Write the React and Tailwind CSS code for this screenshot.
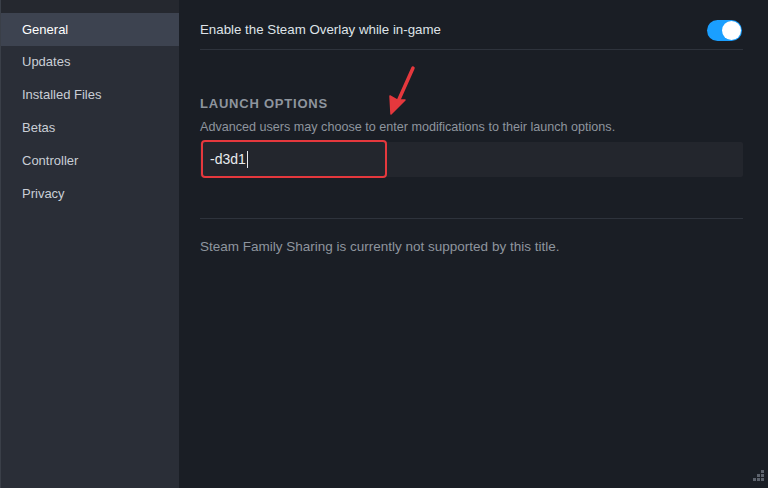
import React from 'react'

const items = ['General', 'Updates', 'Installed Files', 'Betas', 'Controller', 'Privacy']

export default function App() {
  return (
    <div
      className="w-[768px] h-[488px] flex bg-[#1a1e25] overflow-hidden relative"
      style={{ fontFamily: '"Liberation Sans", Arial, sans-serif' }}
    >
      {/* sidebar */}
      <div className="w-[179px] shrink-0 bg-[#2a2e37] flex flex-col border-l border-[#3a3f48]">
        <div className="h-[13px] bg-[#25282f]" />
        {items.map((it, i) => (
          <div
            key={it}
            className={
              'h-[32.8px] flex items-center pl-[21px] text-[13px] ' +
              (i === 0 ? 'bg-[#3d4350] text-white' : 'text-[#c9ced6]')
            }
          >
            {it}
          </div>
        ))}
      </div>

      {/* main */}
      <div className="flex-1 pl-[21px] pr-[25px] pt-[10px]">
        <div className="flex items-center justify-between h-[40px] border-b border-[#2e333c] pr-[1px]">
          <span className="text-[13.3px] text-[#dfe3e8]">Enable the Steam Overlay while in-game</span>
          <div className="w-[35px] h-[21px] mt-[2px] rounded-full bg-[#1a9fff] flex items-center justify-end pr-[1px]">
            <div className="w-[19px] h-[19px] rounded-full bg-white" />
          </div>
        </div>

        <div className="mt-[44px] text-[13px] font-bold tracking-[0.06em] text-[#8e959e]">
          LAUNCH OPTIONS
        </div>
        <div className="mt-[4px] text-[12.6px] text-[#8e959e]">
          Advanced users may choose to enter modifications to their launch options.
        </div>
        <div className="mt-[6px] h-[35px] bg-[#23262d] rounded-[2px] relative">
          <div className="absolute left-[1px] top-[-2px] w-[186px] h-[38px] border-2 border-[#e5383d] rounded-[4px]" />
          <div className="h-full flex items-center pl-[10px] text-[14px] text-[#e8ebee]">
            -d3d1<span className="w-px h-[17px] bg-[#e8ebee] ml-[1px]" />
          </div>
        </div>

        <div className="mt-[41px] border-t border-[#2e333c]" />
        <div className="mt-[18px] text-[13.5px] text-[#8e959e]">
          Steam Family Sharing is currently not supported by this title.
        </div>
      </div>

      {/* annotation arrow */}
      <svg className="absolute left-0 top-0 pointer-events-none" width="768" height="488">
        <line x1="413" y1="68" x2="396" y2="106" stroke="#e5383d" strokeWidth="3.5" strokeLinecap="round" />
        <polygon points="391,114 390,96 397,100 405,100" fill="#e5383d" stroke="#e5383d" strokeWidth="1.5" strokeLinejoin="round" />
        <g fill="#5c626c">
          <rect x="761" y="470" width="3" height="3" />
          <rect x="757" y="474" width="3" height="3" />
          <rect x="761" y="474" width="3" height="3" />
          <rect x="753" y="478" width="3" height="3" />
          <rect x="757" y="478" width="3" height="3" />
          <rect x="761" y="478" width="3" height="3" />
        </g>
      </svg>
    </div>
  )
}
